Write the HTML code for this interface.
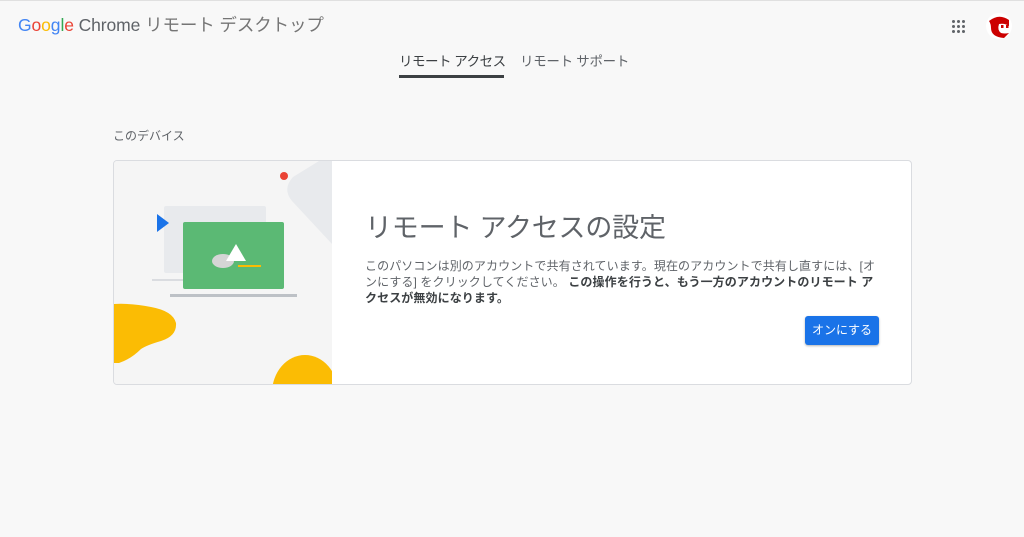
<!DOCTYPE html>
<html><head><meta charset="utf-8"><style>
body{margin:0;width:1024px;height:537px;background:#f8f8f8;font-family:"Liberation Sans","Noto Sans CJK JP",sans-serif;position:relative;overflow:hidden;color:#5f6368}
.a{position:absolute;white-space:nowrap}
</style></head><body>
<div style="position:absolute;left:0;top:0;width:1024px;height:1px;background:#e0e0e0"></div>
<div class="a" style="left:18px;top:13px;font-size:17.5px;line-height:24px;letter-spacing:-0.1px"><span><span style="color:#4285f4">G</span><span style="color:#ea4335">o</span><span style="color:#fbbc04">o</span><span style="color:#4285f4">g</span><span style="color:#34a853">l</span><span style="color:#ea4335">e</span></span> <span style="color:#5f6368">Chrome</span> <span style="color:#757575">リモート デスクトップ</span></div>
<svg class="a" style="left:951px;top:19px" width="16" height="16"><g fill="#5f6368"><circle cx="2.5" cy="2.5" r="1.5"/><circle cx="7.5" cy="2.5" r="1.5"/><circle cx="12.5" cy="2.5" r="1.5"/><circle cx="2.5" cy="7.5" r="1.5"/><circle cx="7.5" cy="7.5" r="1.5"/><circle cx="12.5" cy="7.5" r="1.5"/><circle cx="2.5" cy="12.5" r="1.5"/><circle cx="7.5" cy="12.5" r="1.5"/><circle cx="12.5" cy="12.5" r="1.5"/></g></svg>
<svg class="a" style="left:985px;top:12px" width="28" height="28"><circle cx="14" cy="14" r="13" fill="#fff"/><path d="M4 9 Q14 1 24 8 L24 14 Q20 11 14 12 Q12 18 16 21 Q20 22 24 21 L19 26 Q6 25 6 16 Q6 12 4 9 Z" fill="#c00"/><rect x="16" y="13" width="2.5" height="3" fill="#c00"/><rect x="21" y="13" width="2.5" height="3" fill="#c00"/></svg>
<div class="a" style="left:399px;top:50px;font-size:13.5px;letter-spacing:-0.5px;color:#3c4043">リモート アクセス</div>
<div style="position:absolute;left:399px;top:75px;width:105px;height:3px;background:#3c4043"></div>
<div class="a" style="left:520px;top:50px;font-size:13.5px;letter-spacing:-0.3px;color:#5f6368">リモート サポート</div>
<div class="a" style="left:113px;top:127px;font-size:12px;color:#5f6368">このデバイス</div>
<div style="position:absolute;left:113px;top:160px;width:797px;height:223px;border:1px solid #dadce0;border-radius:4px;background:#fff;overflow:hidden">
<svg style="position:absolute;left:0;top:0" width="218" height="223" viewBox="113 160 218 223">
<rect x="113" y="160" width="218" height="224" fill="#f5f5f5"/>
<path d="M318 160 L331 160 L331 243 L291 200 Q281 188 292 176 Z" fill="#e8eaed"/>
<circle cx="283" cy="175" r="4" fill="#ea4335"/>
<rect x="163" y="205" width="102" height="67" rx="2" fill="#e8eaed"/>
<rect x="151" y="278" width="32" height="2" fill="#dadce0"/>
<path d="M156 213 L168 222 L156 231 Z" fill="#1a73e8"/>
<rect x="182" y="221" width="101" height="67" rx="2" fill="#5bb974"/>
<rect x="169" y="293" width="127" height="3" fill="#bdc1c6"/>
<ellipse cx="222" cy="260" rx="11" ry="7" fill="#d5d5d5"/>
<path d="M235 243 L245 260 L225 260 Z" fill="#fff"/>
<rect x="237" y="264" width="23" height="2" fill="#fbbc04"/>
<path d="M113 303 Q130 302 150 306 Q172 310 175 322 Q176 335 160 340 Q146 344 140 348 Q130 358 118 362 L113 362 Z" fill="#fbbc04"/>
<ellipse cx="304" cy="392" rx="33" ry="38" fill="#fbbc04"/>
</svg>
<div class="a" style="left:251px;top:45px;font-size:27px;letter-spacing:-0.2px;color:#5f6368">リモート アクセスの設定</div>
<div style="position:absolute;left:251px;top:97px;width:519px;font-size:12px;line-height:16px;letter-spacing:0.1px;color:#5f6368">このパソコンは別のアカウントで共有されています。現在のアカウントで共有し直すには、[オンにする] をクリックしてください。 <b style="color:#3c4043">この操作を行うと、もう一方のアカウントのリモート アクセスが無効になります。</b></div>
<div style="position:absolute;left:691px;top:155px;width:74px;height:29px;background:#1a73e8;border-radius:3px;box-shadow:0 1px 2px rgba(0,0,0,.3);color:#fff;font-size:12px;line-height:29px;text-align:center">オンにする</div>
</div>
</body></html>
